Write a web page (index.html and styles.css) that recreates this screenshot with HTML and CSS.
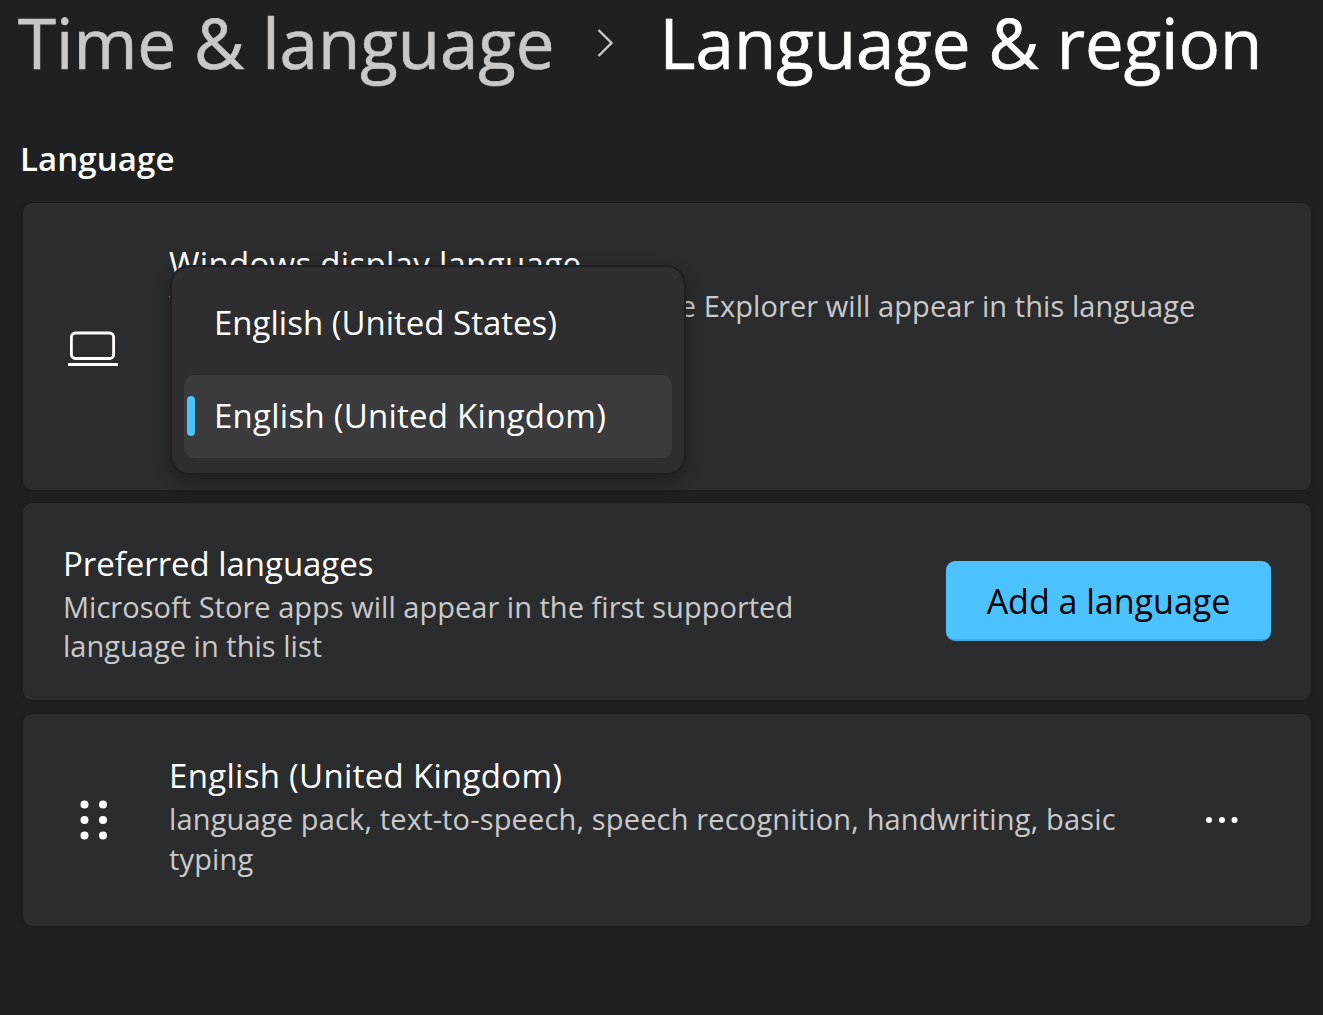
FILE: index.html
```html
<!DOCTYPE html>
<html lang="en">
<head>
<meta charset="utf-8">
<title>Language &amp; region</title>
<link rel="stylesheet" href="styles.css">
</head>
<body>
<main class="page">
  <header class="crumbs">
    <span class="crumb-parent">Time &amp; language</span>
    <svg class="chevron" viewBox="0 0 16 28" aria-hidden="true"><path d="M1.5 1 L14.5 14 L1.5 27"/></svg>
    <span class="crumb-current">Language &amp; region</span>
  </header>
  <h2 class="section">Language</h2>
  <section class="card card-display">
    <div class="icon-slot">
      <svg class="laptop" viewBox="0 0 50 36" aria-hidden="true">
        <rect x="3.4" y="2" width="42.2" height="25.5" rx="4"/>
        <path d="M0 33.5 H50"/>
      </svg>
    </div>
    <div class="text-block display-text">
      <div class="title">Windows display language</div>
      <div class="sub">Windows features like Settings and File Explorer will appear in this language</div>
    </div>
    <div class="menu">
      <div class="menu-item">English (United States)</div>
      <div class="menu-item selected"><span class="marker"></span>English (United Kingdom)</div>
    </div>
  </section>
  <section class="card card-preferred">
    <div class="text-block preferred-text">
      <div class="title">Preferred languages</div>
      <div class="sub">Microsoft Store apps will appear in the first supported<br>language in this list</div>
    </div>
    <button class="add-btn">Add a language</button>
  </section>
  <section class="card card-lang">
    <div class="icon-slot">
      <svg class="grip" viewBox="0 0 28 40" aria-hidden="true">
        <circle cx="4.5" cy="4.5" r="4"/><circle cx="23" cy="4.5" r="4"/>
        <circle cx="4.5" cy="20" r="4"/><circle cx="23" cy="20" r="4"/>
        <circle cx="4.5" cy="35.5" r="4"/><circle cx="23" cy="35.5" r="4"/>
      </svg>
    </div>
    <div class="text-block lang-text">
      <div class="title">English (United Kingdom)</div>
      <div class="sub">language pack, text-to-speech, speech recognition, handwriting, basic typing</div>
    </div>
    <svg class="more" viewBox="0 0 32 6" aria-hidden="true">
      <circle cx="3" cy="3" r="3"/><circle cx="16" cy="3" r="3"/><circle cx="28.5" cy="3" r="3"/>
    </svg>
  </section>
</main>
</body>
</html>
```
FILE: styles.css
```css
* { box-sizing: border-box; }
html, body { margin: 0; height: 100%; overflow: hidden; }
body {
  background: #1f2022;
  color: #fff;
  font-family: "Open Sans", "Noto Sans", sans-serif;
}
.page { padding: 0 12px 0 23px; display: flex; flex-direction: column; }
.crumbs {
  display: flex;
  align-items: center;
  height: 84px;
  margin-left: -5px;
  font-size: 69px;
  -webkit-text-stroke: .7px currentColor;
  line-height: 84px;
  white-space: nowrap;
}
.crumb-parent { color: #c8c8c8; }
.crumb-current { color: #fff; }
.chevron {
  width: 16px; height: 28px; margin: 2px 47px 0 42px;
  fill: none; stroke: #c8c8c8; stroke-width: 2.4;
}
.section {
  margin: 0 0 0 -3px;
  padding-top: 54px;
  height: 119px;
  font-size: 33px;
  line-height: 42px;
  font-weight: 600;
  letter-spacing: .1px;
}
.card {
  background: #2b2c2e;
  border-radius: 9px;
  box-shadow: 0 0 4px rgba(0,0,0,.18);
  position: relative;
  display: flex;
  align-items: center;
}
.card-display { height: 287px; margin-bottom: 13px; }
.card-preferred { height: 197px; margin-bottom: 14px; padding: 0 40px; justify-content: space-between; }
.card-lang { height: 212px; padding-right: 73px; }
.icon-slot { width: 146px; flex: none; display: flex; justify-content: center; padding-right: 4px; }
.laptop { width: 50px; height: 36px; fill: none; stroke: #fff; stroke-width: 2.8; margin: 5px 0 0 -2px; }
.grip { width: 28px; height: 40px; fill: #fff; }
.more { width: 32px; height: 6px; fill: #fff; flex: none; margin-left: 84px; }
.text-block { min-width: 0; }
.title { font-size: 33px; line-height: 40px; letter-spacing: .3px; font-weight: 400; }
.sub { font-size: 29px; line-height: 39px; letter-spacing: .07px; color: #c9c9ca; }
.display-text { align-self: flex-start; padding-top: 41px; white-space: nowrap; }
.display-text .sub { margin-top: 2px; }
.preferred-text { padding-top: 5px; }
.preferred-text .title { letter-spacing: -.05px; }
.preferred-text .sub { margin-top: 3px; letter-spacing: .02px; }
.lang-text { flex: 1; padding-bottom: 5px; }
.lang-text .sub { margin-top: 3px; line-height: 40.5px; letter-spacing: .16px; }
.add-btn {
  width: 325px;
  height: 80px;
  margin-top: -1px;
  border: 0;
  border-bottom: 2px solid #44a8e0;
  border-radius: 9px;
  background: #4cc2ff;
  color: #000;
  font: inherit;
  font-size: 34px;
  padding: 2px 0 0;
}
.menu {
  position: absolute;
  left: 147px;
  top: 62px;
  width: 516px;
  height: 210px;
  padding: 15px 12px 0;
  background: #2e2e30;
  border: 2px solid #1e1f21;
  border-radius: 20px;
  box-shadow: 0 6px 16px rgba(0,0,0,.3);
  display: flex;
  flex-direction: column;
  gap: 10px;
}
.menu-item {
  height: 83px;
  flex: none;
  display: flex;
  align-items: center;
  padding: 0 0 2px 30px;
  font-size: 33px;
  border-radius: 10px;
  position: relative;
}
.menu-item.selected { background: #3b3b3d; letter-spacing: .25px; }
.marker {
  position: absolute;
  left: 3px;
  top: 21px;
  width: 8px;
  height: 40px;
  border-radius: 4px;
  background: #4cc2ff;
}
```
